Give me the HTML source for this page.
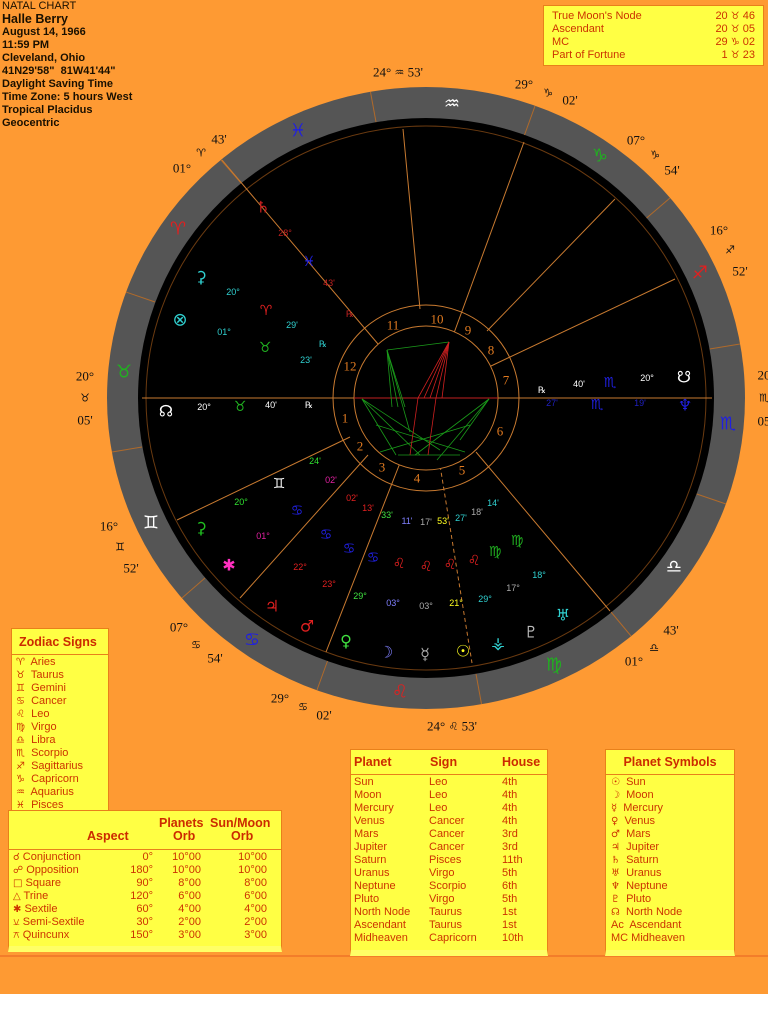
<!DOCTYPE html>
<html><head><meta charset="utf-8"><style>
*{margin:0;padding:0;box-sizing:border-box}
body{width:768px;height:1024px;background:#fff;position:relative;overflow:hidden;font-family:"Liberation Sans",Arial,sans-serif}
#bg{position:absolute;left:0;top:0;width:768px;height:994px;background:#fe9a33}
.hd{position:absolute;left:2px;top:0;font-size:11px;line-height:13px;color:#1a1000;font-weight:bold}
.box{position:absolute;background:#ffff44;border:1px solid #e8801a;color:#cc3300;font-size:11px;line-height:13px}
.box .h{color:#cc2a00;font-weight:bold;font-size:12.5px;border-bottom:1px solid #e8801a}
.r{position:absolute}
.g{font-family:"DejaVu Sans",sans-serif;font-size:10px}
svg{position:absolute;left:0;top:0}
</style></head><body>
<div id="bg"></div>
<div class="hd"><div style="font-weight:normal">NATAL CHART</div><div style="font-size:12.5px">Halle Berry</div>August 14, 1966<br>11:59 PM<br>Cleveland, Ohio<br>41N29'58"&nbsp;&nbsp;81W41'44"<br>Daylight Saving Time<br>Time Zone: 5 hours West<br>Tropical Placidus<br>Geocentric</div>

<div class="box" style="left:543px;top:5px;width:221px;height:61px;padding:4px 8px">
<div style="position:relative;height:13px">True Moon's Node<span style="position:absolute;right:0">20 <span class="g">♉&#xFE0E;</span> 46</span></div>
<div style="position:relative;height:13px">Ascendant<span style="position:absolute;right:0">20 <span class="g">♉&#xFE0E;</span> 05</span></div>
<div style="position:relative;height:13px">MC<span style="position:absolute;right:0">29 <span class="g">♑&#xFE0E;</span> 02</span></div>
<div style="position:relative;height:13px">Part of Fortune<span style="position:absolute;right:0">1 <span class="g">♉&#xFE0E;</span> 23</span></div>
</div>

<svg width="768" height="994" viewBox="0 0 768 994" font-family="Liberation Sans, DejaVu Sans, sans-serif">
<ellipse cx="426" cy="398" rx="319" ry="311" fill="#555"/>
<ellipse cx="426" cy="398" rx="288" ry="280" fill="#000"/>
<ellipse cx="426" cy="398" rx="280" ry="272" fill="none" stroke="#6a3a10" stroke-width="1"/>
<g stroke="#b06a2a" stroke-width="1">
<line x1="376" y1="122" x2="370.5" y2="92"/><line x1="524.5" y1="135" x2="535" y2="106"/>
<line x1="646.6" y1="218" x2="670" y2="198"/><line x1="709.7" y1="349" x2="740" y2="344"/>
<line x1="696.7" y1="494" x2="726" y2="504"/><line x1="611" y1="612" x2="631" y2="636"/>
<line x1="476" y1="674" x2="481.5" y2="704"/><line x1="327.5" y1="661" x2="317" y2="690"/>
<line x1="205" y1="578" x2="182" y2="598"/><line x1="142" y1="447" x2="112" y2="452"/>
<line x1="155" y1="302" x2="126" y2="292"/><line x1="241" y1="183" x2="221" y2="160"/>
</g>
<g stroke="#c87a30" stroke-width="1">
<line x1="142" y1="398" x2="712" y2="398"/>
<line x1="403" y1="129" x2="420" y2="309"/>
<line x1="524" y1="142" x2="454" y2="333"/>
<line x1="615" y1="199" x2="487" y2="331"/>
<line x1="675" y1="279" x2="491" y2="366"/>
<line x1="476" y1="452" x2="610" y2="611"/>
<line x1="400" y1="463" x2="326" y2="652"/>
<line x1="368" y1="455" x2="240" y2="598"/>
<line x1="350" y1="437" x2="177" y2="520"/>
<line x1="378" y1="344" x2="222" y2="160"/>
<line x1="439" y1="459" x2="472" y2="663" stroke-dasharray="4 3"/>
</g>
<circle cx="426" cy="398" r="93" fill="none" stroke="#c87a30"/>
<circle cx="426" cy="398" r="72" fill="#000" stroke="#c87a30"/>
<line x1="354" y1="398" x2="498" y2="398" stroke="#c02020"/>
<g stroke="#1a9a1a" stroke-width="0.8" fill="none">
<polyline points="387,350 449,342"/>
<line x1="387" y1="350" x2="392" y2="407"/><line x1="387" y1="350" x2="398" y2="407"/><line x1="387" y1="350" x2="405" y2="407"/><line x1="387" y1="350" x2="410" y2="432"/>
<line x1="362" y1="399" x2="396" y2="455"/><line x1="362" y1="399" x2="420" y2="455"/><line x1="362" y1="399" x2="440" y2="450"/>
<line x1="489" y1="399" x2="415" y2="455"/><line x1="489" y1="399" x2="437" y2="460"/><line x1="489" y1="399" x2="460" y2="440"/>
<line x1="376" y1="425" x2="465" y2="452"/><line x1="470" y1="425" x2="380" y2="452"/><line x1="398" y1="455" x2="460" y2="455"/>
</g>
<g stroke="#d02020" stroke-width="0.8">
<line x1="449" y1="342" x2="418" y2="398"/><line x1="449" y1="342" x2="424" y2="398"/><line x1="449" y1="342" x2="430" y2="398"/><line x1="449" y1="342" x2="436" y2="398"/><line x1="449" y1="342" x2="442" y2="398"/>
<line x1="418" y1="398" x2="410" y2="455"/><line x1="436" y1="398" x2="428" y2="455"/>
</g>
<g font-family="Liberation Serif, serif" font-size="13" fill="#e07a20" text-anchor="middle" dominant-baseline="central">
<text x="393" y="325">11</text><text x="437" y="319">10</text><text x="468" y="330">9</text><text x="491" y="350">8</text><text x="506" y="380">7</text><text x="350" y="366">12</text><text x="345" y="418">1</text><text x="360" y="446">2</text><text x="382" y="467">3</text><text x="417" y="478">4</text><text x="462" y="470">5</text><text x="500" y="431">6</text>
</g>
<g font-family="DejaVu Sans, sans-serif" font-size="18" font-weight="bold" text-anchor="middle" dominant-baseline="central">
<text x="452" y="104" fill="#fff">♒&#xFE0E;</text><text x="600" y="156" fill="#20b020">♑&#xFE0E;</text><text x="700" y="273" fill="#e02020">♐&#xFE0E;</text><text x="728" y="424" fill="#2020e0">♏&#xFE0E;</text><text x="674" y="567" fill="#fff">♎&#xFE0E;</text><text x="554" y="665" fill="#20b020">♍&#xFE0E;</text><text x="400" y="692" fill="#e02020">♌&#xFE0E;</text><text x="252" y="640" fill="#2020e0">♋&#xFE0E;</text><text x="151" y="523" fill="#fff">♊&#xFE0E;</text><text x="124" y="372" fill="#20b020">♉&#xFE0E;</text><text x="178" y="229" fill="#e02020">♈&#xFE0E;</text><text x="298" y="131" fill="#2020e0">♓&#xFE0E;</text>
</g>
<g font-family="DejaVu Sans, sans-serif" font-size="16" text-anchor="middle" dominant-baseline="central">
<text x="263" y="207" fill="#d02020">♄</text><text x="309" y="262" fill="#2020e0" font-size="14">♓&#xFE0E;</text>
<text x="201" y="277" fill="#30d0d0">⚳</text><text x="266" y="311" fill="#e02020" font-size="14">♈&#xFE0E;</text>
<text x="180" y="320" fill="#30d0d0" font-size="18">⊗</text><text x="265" y="348" fill="#20b020" font-size="14">♉&#xFE0E;</text>
<text x="166" y="411" fill="#fff">☊</text><text x="240" y="407" fill="#20b020" font-size="14">♉&#xFE0E;</text>
<text x="610" y="383" fill="#2020e0" font-size="14">♏&#xFE0E;</text><text x="684" y="377" fill="#fff">☋</text>
<text x="597" y="405" fill="#2020e0" font-size="14">♏&#xFE0E;</text><text x="685" y="405" fill="#2020e0">♆</text>
<text x="279" y="484" fill="#fff" font-size="14">♊&#xFE0E;</text><text x="297" y="511" fill="#2020e0" font-size="14">♋&#xFE0E;</text>
<text x="201" y="528" fill="#20c020">⚳</text><text x="326" y="535" fill="#2020e0" font-size="14">♋&#xFE0E;</text>
<text x="349" y="549" fill="#2020e0" font-size="14">♋&#xFE0E;</text><text x="373" y="558" fill="#2020e0" font-size="14">♋&#xFE0E;</text>
<text x="229" y="565" fill="#ff30c0">✱</text><text x="272" y="606" fill="#e02020">♃</text><text x="307" y="626" fill="#e02020">♂</text>
<text x="399" y="564" fill="#e02020" font-size="14">♌&#xFE0E;</text><text x="426" y="567" fill="#e02020" font-size="14">♌&#xFE0E;</text><text x="450" y="565" fill="#e02020" font-size="14">♌&#xFE0E;</text><text x="474" y="561" fill="#e02020" font-size="14">♌&#xFE0E;</text>
<text x="495" y="552" fill="#20b020" font-size="14">♍&#xFE0E;</text><text x="517" y="541" fill="#20b020" font-size="14">♍&#xFE0E;</text>
<text x="346" y="641" fill="#40e040">♀</text><text x="386" y="652" fill="#8080ff">☽</text><text x="425" y="654" fill="#aaa">☿</text><text x="463" y="651" fill="#ffff20">☉</text><text x="498" y="643" fill="#30d0d0">⚶</text><text x="531" y="632" fill="#bbb">♇</text><text x="563" y="615" fill="#30d0d0">♅</text>
</g>
<g font-size="9" text-anchor="middle" dominant-baseline="central">
<text x="285" y="233" fill="#c02020">28°</text><text x="329" y="283" fill="#c02020">43'</text><text x="350" y="314" fill="#c02020">℞</text>
<text x="233" y="292" fill="#30d0d0">20°</text><text x="292" y="325" fill="#30d0d0">29'</text><text x="224" y="332" fill="#30d0d0">01°</text><text x="323" y="344" fill="#30d0d0">℞</text><text x="306" y="360" fill="#30d0d0">23'</text>
<text x="204" y="407" fill="#fff">20°</text><text x="271" y="405" fill="#fff">40'</text><text x="309" y="405" fill="#fff">℞</text>
<text x="542" y="390" fill="#fff">℞</text><text x="579" y="384" fill="#fff">40'</text><text x="647" y="378" fill="#fff">20°</text>
<text x="552" y="403" fill="#2020c0">27'</text><text x="640" y="403" fill="#2020c0">19'</text>
<text x="315" y="461" fill="#30e030">24'</text><text x="331" y="480" fill="#e020a0">02'</text><text x="241" y="502" fill="#30e030">20°</text><text x="352" y="498" fill="#e02020">02'</text><text x="368" y="508" fill="#e02020">13'</text><text x="263" y="536" fill="#e020a0">01°</text><text x="300" y="567" fill="#e02020">22°</text><text x="329" y="584" fill="#e02020">23°</text>
<text x="387" y="515" fill="#40e040">33'</text><text x="407" y="521" fill="#8080ff">11'</text><text x="426" y="522" fill="#aaa">17'</text><text x="443" y="521" fill="#ffff20">53'</text><text x="461" y="518" fill="#30d0d0">27'</text><text x="477" y="512" fill="#aaa">18'</text><text x="493" y="503" fill="#30d0d0">14'</text>
<text x="539" y="575" fill="#30d0d0">18°</text><text x="513" y="588" fill="#aaa">17°</text>
<text x="360" y="596" fill="#40e040">29°</text><text x="393" y="603" fill="#8080ff">03°</text><text x="426" y="606" fill="#aaa">03°</text><text x="456" y="603" fill="#ffff20">21°</text><text x="485" y="599" fill="#30d0d0">29°</text>
</g>
<g font-family="Liberation Serif, serif" font-size="13" fill="#111" text-anchor="middle" dominant-baseline="central">
<text x="398" y="72">24° <tspan font-family="DejaVu Sans, sans-serif" font-size="11">♒&#xFE0E;</tspan> 53'</text>
<text x="524" y="84">29°</text><text x="548" y="93" font-family="DejaVu Sans, sans-serif" font-size="11">♑&#xFE0E;</text><text x="570" y="100">02'</text>
<text x="636" y="140">07°</text><text x="655" y="155" font-family="DejaVu Sans, sans-serif" font-size="11">♑&#xFE0E;</text><text x="672" y="170">54'</text>
<text x="719" y="230">16°</text><text x="730" y="250" font-family="DejaVu Sans, sans-serif" font-size="11">♐&#xFE0E;</text><text x="740" y="271">52'</text>
<text x="764" y="375">20</text><text x="764" y="398" font-family="DejaVu Sans, sans-serif" font-size="11">♏&#xFE0E;</text><text x="764" y="421">05</text>
<text x="671" y="630">43'</text><text x="654" y="648" font-family="DejaVu Sans, sans-serif" font-size="11">♎&#xFE0E;</text><text x="634" y="661">01°</text>
<text x="452" y="726">24° <tspan font-family="DejaVu Sans, sans-serif" font-size="11">♌&#xFE0E;</tspan> 53'</text>
<text x="280" y="698">29°</text><text x="303" y="707" font-family="DejaVu Sans, sans-serif" font-size="11">♋&#xFE0E;</text><text x="324" y="715">02'</text>
<text x="179" y="627">07°</text><text x="196" y="645" font-family="DejaVu Sans, sans-serif" font-size="11">♋&#xFE0E;</text><text x="215" y="658">54'</text>
<text x="109" y="526">16°</text><text x="120" y="547" font-family="DejaVu Sans, sans-serif" font-size="11">♊&#xFE0E;</text><text x="131" y="568">52'</text>
<text x="85" y="376">20°</text><text x="85" y="398" font-family="DejaVu Sans, sans-serif" font-size="11">♉&#xFE0E;</text><text x="85" y="420">05'</text>
<text x="219" y="139">43'</text><text x="201" y="153" font-family="DejaVu Sans, sans-serif" font-size="11">♈&#xFE0E;</text><text x="182" y="168">01°</text>
</g>
<line x1="0" y1="956" x2="768" y2="956" stroke="#e86020" stroke-width="1"/>
</svg>

<div class="box" style="left:11px;top:628px;width:98px;height:190px">
<div class="h" style="height:26px;line-height:26px;padding-left:7px">Zodiac Signs</div>
<div style="padding:1px 0 0 4px">
<div><span class="g">♈&#xFE0E;</span>&nbsp; Aries</div><div><span class="g">♉&#xFE0E;</span>&nbsp; Taurus</div><div><span class="g">♊&#xFE0E;</span>&nbsp; Gemini</div><div><span class="g">♋&#xFE0E;</span>&nbsp; Cancer</div><div><span class="g">♌&#xFE0E;</span>&nbsp; Leo</div><div><span class="g">♍&#xFE0E;</span>&nbsp; Virgo</div><div><span class="g">♎&#xFE0E;</span>&nbsp; Libra</div><div><span class="g">♏&#xFE0E;</span>&nbsp; Scorpio</div><div><span class="g">♐&#xFE0E;</span>&nbsp; Sagittarius</div><div><span class="g">♑&#xFE0E;</span>&nbsp; Capricorn</div><div><span class="g">♒&#xFE0E;</span>&nbsp; Aquarius</div><div><span class="g">♓&#xFE0E;</span>&nbsp; Pisces</div></div>
</div>

<div class="box" style="left:8px;top:810px;width:274px;height:142px;border-bottom:6px solid #ffff66">
<div class="h" style="height:39px;position:relative;font-size:12.5px;line-height:13px">
<span class="r" style="left:78px;top:19px">Aspect</span>
<span class="r" style="left:150px;top:6px">Planets</span><span class="r" style="left:164px;top:19px">Orb</span>
<span class="r" style="left:201px;top:6px">Sun/Moon</span><span class="r" style="left:222px;top:19px">Orb</span></div>
<div style="position:relative;padding-top:1px">
<div style="position:relative;height:13px;padding-left:4px"><span class="g">☌</span> Conjunction<span class="r" style="right:128px">0°</span><span class="r" style="right:80px">10°00</span><span class="r" style="right:14px">10°00</span></div>
<div style="position:relative;height:13px;padding-left:4px"><span class="g">☍</span> Opposition<span class="r" style="right:128px">180°</span><span class="r" style="right:80px">10°00</span><span class="r" style="right:14px">10°00</span></div>
<div style="position:relative;height:13px;padding-left:4px"><span class="g">□</span> Square<span class="r" style="right:128px">90°</span><span class="r" style="right:80px">8°00</span><span class="r" style="right:14px">8°00</span></div>
<div style="position:relative;height:13px;padding-left:4px"><span class="g">△</span> Trine<span class="r" style="right:128px">120°</span><span class="r" style="right:80px">6°00</span><span class="r" style="right:14px">6°00</span></div>
<div style="position:relative;height:13px;padding-left:4px"><span class="g">✱</span> Sextile<span class="r" style="right:128px">60°</span><span class="r" style="right:80px">4°00</span><span class="r" style="right:14px">4°00</span></div>
<div style="position:relative;height:13px;padding-left:4px"><span class="g">⚺</span> Semi-Sextile<span class="r" style="right:128px">30°</span><span class="r" style="right:80px">2°00</span><span class="r" style="right:14px">2°00</span></div>
<div style="position:relative;height:13px;padding-left:4px"><span class="g">⚻</span> Quincunx<span class="r" style="right:128px">150°</span><span class="r" style="right:80px">3°00</span><span class="r" style="right:14px">3°00</span></div>
</div></div>

<div class="box" style="left:350px;top:749px;width:198px;height:207px;border-bottom:6px solid #ffff66">
<div class="h" style="height:25px;line-height:24px;position:relative"><span class="r" style="left:3px">Planet</span><span class="r" style="left:79px">Sign</span><span class="r" style="left:151px">House</span></div>
<div style="position:relative;padding-top:1px">
<div style="display:grid;grid-template-columns:75px 73px 40px;padding-left:3px">
<span>Sun</span><span>Leo</span><span>4th</span><span>Moon</span><span>Leo</span><span>4th</span><span>Mercury</span><span>Leo</span><span>4th</span><span>Venus</span><span>Cancer</span><span>4th</span><span>Mars</span><span>Cancer</span><span>3rd</span><span>Jupiter</span><span>Cancer</span><span>3rd</span><span>Saturn</span><span>Pisces</span><span>11th</span><span>Uranus</span><span>Virgo</span><span>5th</span><span>Neptune</span><span>Scorpio</span><span>6th</span><span>Pluto</span><span>Virgo</span><span>5th</span><span>North Node</span><span>Taurus</span><span>1st</span><span>Ascendant</span><span>Taurus</span><span>1st</span><span>Midheaven</span><span>Capricorn</span><span>10th</span>
</div></div></div>

<div class="box" style="left:605px;top:749px;width:130px;height:207px;border-bottom:6px solid #ffff66">
<div class="h" style="height:25px;line-height:24px;text-align:center">Planet Symbols</div>
<div style="padding:1px 0 0 5px">
<div><span class="g">☉</span>&nbsp; Sun</div><div><span class="g">☽</span>&nbsp; Moon</div><div><span class="g">☿</span>&nbsp; Mercury</div><div><span class="g">♀</span>&nbsp; Venus</div><div><span class="g">♂</span>&nbsp; Mars</div><div><span class="g">♃</span>&nbsp; Jupiter</div><div><span class="g">♄</span>&nbsp; Saturn</div><div><span class="g">♅</span>&nbsp; Uranus</div><div><span class="g">♆</span>&nbsp; Neptune</div><div><span class="g">♇</span>&nbsp; Pluto</div><div><span class="g">☊</span>&nbsp; North Node</div><div>Ac&nbsp; Ascendant</div><div>MC Midheaven</div></div>
</div>
</body></html>
